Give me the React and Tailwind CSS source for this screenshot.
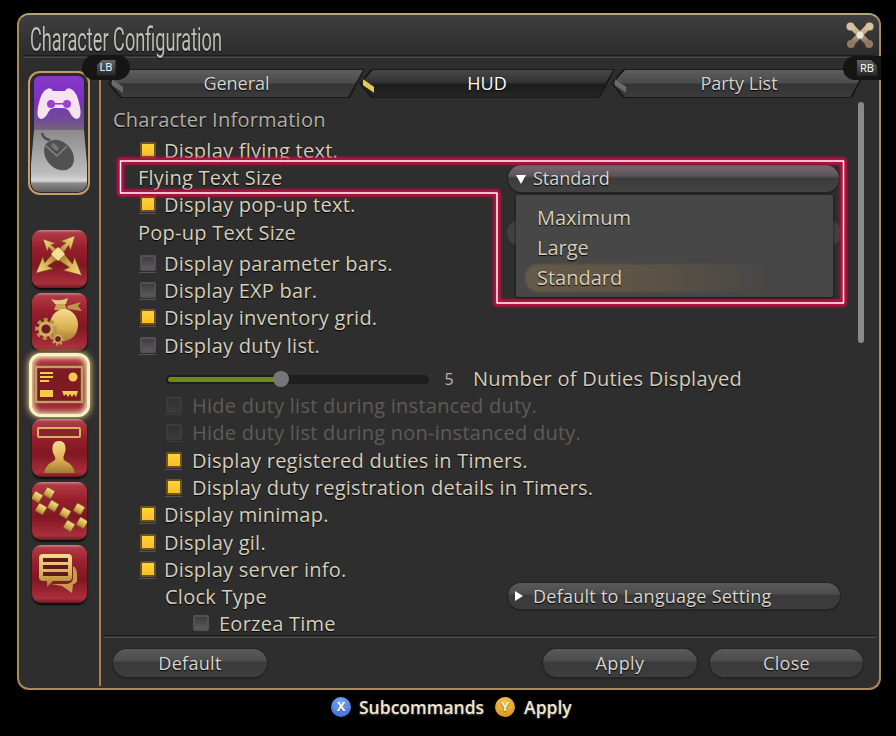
import React from "react";

const font = { fontFamily: '"Open Sans","Noto Sans",sans-serif' };
const goldId = "goldGrad";

function Check({ on, dim }) {
  if (on) {
    return (
      <span className="relative w-[17px] h-[18px] shrink-0 flex flex-col items-center">
        <span className="w-[16px] h-[16px] bg-[#6e5326] flex items-center justify-center rounded-[2px]">
          <span className="w-[12px] h-[12px] bg-[linear-gradient(#ffd23a,#f8bf24)]" />
        </span>
        <span className="w-[17px] h-px bg-[#57544c] mt-px" />
      </span>
    );
  }
  return (
    <span className="relative w-[17px] h-[18px] shrink-0 flex flex-col items-center">
      <span className={`w-[16px] h-[16px] rounded-[2px] flex items-center justify-center ${dim ? "bg-[#3b3b3b]" : "bg-[#525252]"}`}>
        <span className={`w-[12px] h-[12px] ${dim ? "bg-gradient-to-b from-[#303030] to-[#3a3a3a]" : "bg-gradient-to-b from-[#3e3c3e] to-[#5c5a5c]"}`} />
      </span>
      <span className={`w-[17px] h-px mt-px ${dim ? "bg-[#3c3c3c]" : "bg-[#555]"}`} />
    </span>
  );
}

function Row({ indent = "", gap = "gap-[8px]", on, off, dim, children }) {
  return (
    <div className={`flex items-center h-[27.3px] ${gap} ${indent} shrink-0`}>
      {on && <Check on />}
      {off && <Check dim={dim} />}
      <span className={`text-[20px] tracking-[0.25px] leading-none whitespace-nowrap ${dim ? "text-[#5f5b54]" : "text-[#d7cfbb] [text-shadow:0_1px_1px_#000]"}`}>
        {children}
      </span>
    </div>
  );
}

function Pill({ className = "", children }) {
  return (
    <div className={`rounded-full flex items-center justify-center bg-[linear-gradient(#5a5a5a_0%,#4c4c4c_42%,#3a3a3a_48%,#3d3d3d_100%)] shadow-[0_0_0_1px_#262626,0_1px_2px_#111] text-[18px] text-[#d8d8d2] [text-shadow:0_1px_1px_#000] ${className}`}>
      {children}
    </div>
  );
}

function Tab({ children, className = "", active }) {
  return (
    <div className={`relative h-[29px] ${className}`}>
      <div className="absolute inset-0 [clip-path:polygon(0_50%,12px_0,100%_0,calc(100%-15px)_100%,12px_100%)] bg-[#191919]" />
      <div className={`absolute inset-x-[2px] inset-y-[1px] [clip-path:polygon(0_50%,12px_0,100%_0,calc(100%-15px)_100%,12px_100%)] flex items-center justify-center text-[18px] [text-shadow:0_1px_1px_#000] ${active ? "bg-[linear-gradient(#474747_0%,#333_45%,#1d1d1d_55%,#262626_100%)] text-white" : "bg-[linear-gradient(#5d5d5d_0%,#4b4b4b_48%,#343434_52%,#3b3b3b_100%)] text-[#d5d5d0]"}`}>
        {children}
      </div>
      <span className={`absolute left-[4px] top-[14px] w-[11px] h-[6px] skew-y-[35deg] ${active ? "bg-[#e8c84a]" : "bg-[#6a6a6a]"}`} />
    </div>
  );
}

function RedIcon({ selected, children }) {
  return (
    <div className={`w-[55px] h-[58px] rounded-[9px] shrink-0 flex items-center justify-center bg-[linear-gradient(#c9858a_0,#b13a44_5%,#98202d_30%,#7f1722_60%,#a92f3b_92%,#6b1a22_100%)] ${selected ? "outline-[3px] outline-[#f9f1c8] shadow-[0_0_6px_4px_#cdbb76,inset_0_0_5px_2px_#f2e6b0]" : "shadow-[0_2px_2px_#0c0c0c]"}`}>
      {children}
    </div>
  );
}

function Gear({ cx, cy, r }) {
  return (
    <g>
      <circle cx={cx} cy={cy} r={r} fill="none" stroke="#b8954a" strokeWidth={r * 0.42} strokeDasharray={`${r * 0.42} ${r * 0.32}`} />
      <circle cx={cx} cy={cy} r={r * 0.68} fill="#6d1b24" stroke="#d2ad5e" strokeWidth={r * 0.34} />
    </g>
  );
}

const g = "url(#goldGrad)";
const diamonds = [[17, 11], [5, 15], [9, 27], [21, 24], [33, 31], [47, 27], [37, 44], [50, 41]];
const arrowAngles = [[-45, 0.95], [43, 1.13], [-131, 1.32], [132, 1.45]];

export default function App() {
  return (
    <div className="relative w-[896px] h-[736px] bg-black overflow-hidden" style={font}>
      <svg width="0" height="0" className="absolute">
        <defs>
          <linearGradient id={goldId} x1="0" y1="0" x2="0" y2="1">
            <stop offset="0" stopColor="#f6dd8e" />
            <stop offset="0.6" stopColor="#d9ad52" />
            <stop offset="1" stopColor="#a47a33" />
          </linearGradient>
          <linearGradient id="closeGrad" x1="0" y1="0" x2="0" y2="1">
            <stop offset="0" stopColor="#e0c6a0" />
            <stop offset="1" stopColor="#8a715a" />
          </linearGradient>
        </defs>
      </svg>

      <div className="absolute left-[17px] top-[13px] w-[864px] h-[677px] rounded-[12px] border-2 border-[#a98a58] border-t-[#b3a67a] bg-[#2e2e2e] flex flex-col overflow-hidden">
        {/* header */}
        <div className="h-[40px] shrink-0 flex items-start justify-between pl-[11px] pr-[5px] bg-[linear-gradient(#3f3f3f,#2c2c2c)]">
          <span className="origin-left scale-x-[0.55] mt-[8px] text-[33px] leading-[34px] whitespace-nowrap text-[#bdbdb8] [text-shadow:0_1px_1px_#000]" style={{ fontFamily: "Roboto,sans-serif" }}>
            Character Configuration
          </span>
          <svg width="28" height="28" viewBox="0 0 28 28" className="mt-[6px] shrink-0">
            <path d="M5 5 L23 23 M23 5 L5 23" stroke="url(#closeGrad)" strokeWidth="5.5" strokeLinecap="round" />
            <circle cx="4.5" cy="5.5" r="4" fill="#d9c19c" />
            <circle cx="23.5" cy="5.5" r="4" fill="#d9c19c" />
            <circle cx="5" cy="23" r="4" fill="#917860" />
            <circle cx="23" cy="23" r="4" fill="#917860" />
            <circle cx="14" cy="14" r="3.5" fill="#ece8d8" />
          </svg>
        </div>
        <div className="h-[3px] shrink-0 mx-[4px] bg-[linear-gradient(#1d1d1d_33%,#4a4a4a_66%)]" />

        {/* body */}
        <div className="flex-1 flex min-h-0">
          {/* sidebar */}
          <aside className="w-[80px] shrink-0 flex flex-col items-center pt-[13px] gap-[5px]">
            <div className="w-[62px] h-[124px] rounded-[12px] border-2 border-[#c79c68] bg-[#2b2b2b] p-[1px] flex flex-col mb-[30px] shrink-0">
              <div className="mx-[3px] mt-[2px] h-[54px] shrink-0 rounded-t-[6px] bg-[linear-gradient(#8739c9_0%,#7c2fc2_45%,#6f4f91_85%,#77677f_100%)] flex items-center justify-center">
                <svg width="48" height="36" viewBox="0 0 48 36">
                  <path d="M12 4 Q16 2 18 6 H30 Q32 2 36 4 Q42 6 45 22 Q47 33 42 34 Q38 34 34 26 Q32 23 28 23 H20 Q16 23 14 26 Q10 34 6 34 Q1 33 3 22 Q6 6 12 4Z" fill="#f6e3ee" />
                  <circle cx="16" cy="19" r="4" fill="#9a3fd6" />
                  <circle cx="32" cy="19" r="4" fill="#9a3fd6" />
                  <rect x="19" y="18" width="10" height="1.6" fill="#9a3fd6" />
                </svg>
              </div>
              <div className="flex-1 [clip-path:polygon(3px_0,calc(100%-3px)_0,100%_55%,100%_100%,0_100%,0_55%)] rounded-b-[9px] bg-[linear-gradient(#8a8a8a_0%,#bcbcbc_70%,#d6d6d6_82%,#8a8a8a_86%,#606060_100%)] flex justify-center pt-[2px]">
                <svg width="40" height="40" viewBox="0 0 40 40">
                  <path d="M3 1 Q4 7 11 8" stroke="#4d4d4d" strokeWidth="2.5" fill="none" />
                  <ellipse cx="20" cy="23" rx="13" ry="17" transform="rotate(-42 20 23)" fill="#515151" />
                  <path d="M7 14 L18 24 L28 14" stroke="#8c8c8c" strokeWidth="1.2" fill="none" />
                  <rect x="12" y="13" width="8" height="4" transform="rotate(42 16 15)" fill="#777" />
                </svg>
              </div>
            </div>

            <RedIcon>
              <svg width="55" height="58" viewBox="0 0 55 58">
                <g transform="translate(26 24)" fill={g} stroke="#6e4a18" strokeWidth="0.4">
                  {arrowAngles.map(([a, s]) => (
                    <path key={a} transform={`rotate(${a}) scale(${s})`} d="M0 -22 L6 -10 L1.5 -12 L3 -2 L-3 -2 L-1.5 -12 L-6 -10Z" />
                  ))}
                  <path d="M0 -7 L7 0 L0 7 L-7 0Z" fill="#f5df93" stroke="none" />
                </g>
              </svg>
            </RedIcon>
            <RedIcon>
              <svg width="50" height="50" viewBox="0 0 50 50">
                <path d="M17 2 Q25 5 34 1 L32 7 H21Z" fill="#e3c986" />
                <path d="M22 7 H31 L33 13 H20Z" fill="#c9a552" />
                <path d="M33 9 L47 5 L44 9 L48 14 L34 12Z" fill="#b8954a" />
                <ellipse cx="30" cy="28" rx="14" ry="16" fill={g} />
                <Gear cx={12} cy={32} r={9} />
                <Gear cx={24} cy={42} r={5.5} />
              </svg>
            </RedIcon>
            <RedIcon selected>
              <svg width="50" height="40" viewBox="0 0 50 40">
                <rect x="2" y="2" width="46" height="35" fill="#7d1a24" stroke="#bda265" strokeWidth="2.4" />
                <g fill="#f4cb4a">
                  <rect x="6" y="7" width="13" height="2" />
                  <rect x="6" y="11" width="13" height="2" />
                  <rect x="6" y="15" width="9" height="2" />
                  <rect x="6" y="25" width="13" height="7" />
                  <circle cx="39" cy="12" r="4.5" />
                  <path d="M28 26 H44 L42 32 L40 29 L38 32 L36 29 L34 32 L32 29 L30 31Z" />
                </g>
              </svg>
            </RedIcon>
            <RedIcon>
              <svg width="46" height="52" viewBox="0 0 46 52">
                <rect x="2" y="6" width="42" height="9" rx="1" fill="#8a2530" stroke="#d9b35f" strokeWidth="2" />
                <path d="M23 19 C30 19 31 27 28 33 C27 36 27 38 31 40 C35 42 38 46 39 51 H8 C9 46 12 42 16 40 C20 38 20 36 18 33 C15 27 16 19 23 19Z" fill={g} />
              </svg>
            </RedIcon>
            <RedIcon>
              <svg width="55" height="58" viewBox="0 0 55 58">
                {diamonds.map(([x, y]) => (
                  <rect key={`${x}-${y}`} x={x - 4.5} y={y - 4.5} width="9" height="9" rx="1" transform={`rotate(30 ${x} ${y})`} fill={g} stroke="#6e4a18" strokeWidth="0.6" />
                ))}
              </svg>
            </RedIcon>
            <RedIcon>
              <svg width="44" height="46" viewBox="0 0 44 46">
                <path d="M36 15 Q41 17 40 30 Q39 33 36 33 L35 42 L25 35 L14 33 H30 Q36 32 36 27Z" fill="#c79c4e" />
                <path d="M6 3 H31 Q35 3 35 7 V26 Q35 30 31 30 H16 L10 36 L10 30 H6 Q2 30 2 26 V7 Q2 3 6 3Z" fill={g} />
                <rect x="6" y="7" width="25" height="4" fill="#5e1a1f" />
                <rect x="6" y="14" width="25" height="4" fill="#5e1a1f" />
                <rect x="6" y="21" width="25" height="4" fill="#5e1a1f" />
              </svg>
            </RedIcon>
          </aside>

          <div className="w-[2px] shrink-0 bg-[#a5814f] mb-[2px]" />

          {/* main */}
          <main className="flex-1 flex flex-col min-w-0 relative">
            <div className="flex pl-[7px] pt-[11px] shrink-0">
              <Tab className="w-[257px] mr-[-6px]">General</Tab>
              <Tab className="w-[256px] mr-[-4px]" active>HUD</Tab>
              <Tab className="w-[256px]">Party List</Tab>
            </div>

            <div className="flex-1 min-h-0 mb-[3px] relative overflow-hidden flex flex-col pt-[8px] pl-[38px]">
              <div className="h-[27px] flex items-center -ml-[26px] text-[20px] tracking-[0.25px] text-[#b4b0a6] shrink-0 [text-shadow:0_1px_1px_#000]">Character Information</div>
              <div className="h-[4px] shrink-0" />
              <Row on>Display flying text.</Row>
              <Row indent="-ml-px">Flying Text Size</Row>
              <Row on>Display pop-up text.</Row>
              <Row indent="-ml-px">Pop-up Text Size</Row>
              <div className="h-[4px] shrink-0" />
              <Row off>Display parameter bars.</Row>
              <Row off>Display EXP bar.</Row>
              <Row on>Display inventory grid.</Row>
              <Row off>Display duty list.</Row>
              <div className="h-[26px] mt-[7px] shrink-0 flex items-center pl-[27px]">
                <div className="relative w-[263px] h-[9px] rounded-full bg-[#1e1e1e] shrink-0">
                  <div className="w-[115px] h-[9px] rounded-full bg-[#1e1e1e] p-[2px]"><div className="h-[5px] rounded-full bg-[#6f8a1c]" /></div>
                  <div className="absolute left-[107px] -top-[4px] w-[16px] h-[16px] rounded-full bg-[#77777b]" />
                </div>
                <span className="w-[44px] pr-[4px] text-center text-[16px] text-[#b8b4aa] shrink-0">5</span>
                <span className="text-[20px] tracking-[0.25px] text-[#d7cfbb] whitespace-nowrap [text-shadow:0_1px_1px_#000]">Number of Duties Displayed</span>
              </div>
              <Row indent="pl-[26px]" gap="gap-[10px]" off dim>Hide duty list during instanced duty.</Row>
              <Row indent="pl-[26px]" gap="gap-[10px]" off dim>Hide duty list during non-instanced duty.</Row>
              <Row indent="pl-[26px]" gap="gap-[10px]" on>Display registered duties in Timers.</Row>
              <Row indent="pl-[26px]" gap="gap-[10px]" on>Display duty registration details in Timers.</Row>
              <Row on>Display minimap.</Row>
              <Row on>Display gil.</Row>
              <Row on>Display server info.</Row>
              <Row indent="pl-[26px]">Clock Type</Row>
              <Row indent="pl-[53px]" gap="gap-[10px]" off>Eorzea Time</Row>

              {/* scrollbar */}
              <div className="absolute right-[15px] top-[4px] w-[6px] h-[241px] rounded-full bg-[#8a8a8a]" />
              {/* language pulldown */}
              <Pill className="absolute left-[407px] top-[485px] w-[332px] h-[26px] !justify-start pl-[7px] gap-[10px] tracking-[0.25px]">
                <span className="w-0 h-0 border-y-[5px] border-y-transparent border-l-[8px] border-l-white" />
                Default to Language Setting
              </Pill>
            </div>

            <div className="h-[3px] shrink-0 mx-[3px] bg-[linear-gradient(#1d1d1d_33%,#4a4a4a_66%)]" />
            <div className="h-[50px] shrink-0 flex items-center pl-[12px] pr-[16px]">
              <Pill className="w-[154px] h-[28px] tracking-[0.3px]">Default</Pill>
              <div className="flex-1" />
              <Pill className="w-[154px] h-[28px] tracking-[0.4px]">Apply</Pill>
              <Pill className="w-[153px] h-[28px] ml-[13px] tracking-[0.3px]">Close</Pill>
            </div>
          </main>
        </div>
      </div>

      {/* LB / RB tags */}
      <div className="absolute left-[82px] top-[55px] w-[48px] h-[25px] rounded-full bg-[#151515] flex items-center justify-center">
        <span className="w-[19px] h-[16px] [clip-path:polygon(6px_0,100%_0,100%_100%,0_100%,0_6px)] bg-[linear-gradient(#666,#242424)] text-[11px] text-white flex items-center justify-center">LB</span>
      </div>
      <div className="absolute left-[843px] top-[56px] w-[38px] h-[24px] rounded-l-full bg-[#151515] flex items-center justify-end pr-[4px]">
        <span className="w-[20px] h-[16px] [clip-path:polygon(0_0,calc(100%-6px)_0,100%_6px,100%_100%,0_100%)] bg-[linear-gradient(#666,#242424)] text-[11px] text-white flex items-center justify-center">RB</span>
      </div>

      {/* open dropdown */}
      <div className="absolute left-[507px] top-[220px] w-[334px] h-[26px] rounded-full bg-[#414141]" />
      <Pill className="absolute left-[508px] top-[165px] w-[331px] h-[27px] !justify-start pl-[8px] gap-[7px] text-[17.4px] bg-[linear-gradient(#786870_0%,#5c545a_40%,#3c3c3c_50%,#424242_100%)]">
        <span className="w-0 h-0 border-x-[5px] border-x-transparent border-t-[9px] border-t-white mt-[2px]" />
        Standard
      </Pill>
      <div className="absolute left-[516px] top-[195px] w-[317px] h-[102px] rounded-[2px] bg-[#474747] shadow-[0_1px_3px_#111] flex flex-col pt-[8px] px-[8px] text-[20px] text-[#d7cfbb] [text-shadow:0_1px_1px_#000]">
        <div className="h-[30px] flex items-center pl-[13px]">Maximum</div>
        <div className="h-[30px] flex items-center pl-[13px]">Large</div>
        <div className="relative h-[30px] flex items-center pl-[13px]">
          <span className="absolute inset-[1px] rounded-l-full blur-[1px] bg-[linear-gradient(90deg,#665a48_0%,#5f5546_35%,#474747_82%)]" />
          <span className="relative">Standard</span>
        </div>
      </div>

      {/* highlight */}
      <svg className="absolute inset-0 pointer-events-none" width="896" height="736">
        <defs>
          <filter id="glow" x="-5%" y="-5%" width="110%" height="110%">
            <feGaussianBlur stdDeviation="1.5" />
          </filter>
        </defs>
        <path d="M120.5 161 H843.5 V303 H497 V193 H120.5 Z" fill="none" stroke="#c80f45" strokeWidth="7" filter="url(#glow)" strokeLinejoin="round" />
        <path d="M120.5 161 H843.5 V303 H497 V193 H120.5 Z" fill="none" stroke="#b80c3e" strokeWidth="4" strokeLinejoin="round" />
        <path d="M120.5 161 H843.5 V303 H497 V193 H120.5 Z" fill="none" stroke="#ffffff" strokeWidth="1.5" strokeLinejoin="round" />
      </svg>

      {/* hints */}
      <div className="absolute left-[331px] top-[695px] h-[24px] flex items-center text-[17.5px] font-semibold text-[#eee6d0] [text-shadow:0_1px_2px_#555]">
        <span className="w-[20px] h-[20px] rounded-full bg-[radial-gradient(circle_at_50%_30%,#7fb0f5,#2f62d8)] text-white text-[13px] font-bold flex items-center justify-center">X</span>
        <span className="ml-[8px]">Subcommands</span>
        <span className="ml-[11px] w-[20px] h-[20px] rounded-full bg-[radial-gradient(circle_at_50%_30%,#f8c850,#d68818)] text-[#fff3b0] text-[13px] font-bold flex items-center justify-center">Y</span>
        <span className="ml-[9px]">Apply</span>
      </div>
    </div>
  );
}
